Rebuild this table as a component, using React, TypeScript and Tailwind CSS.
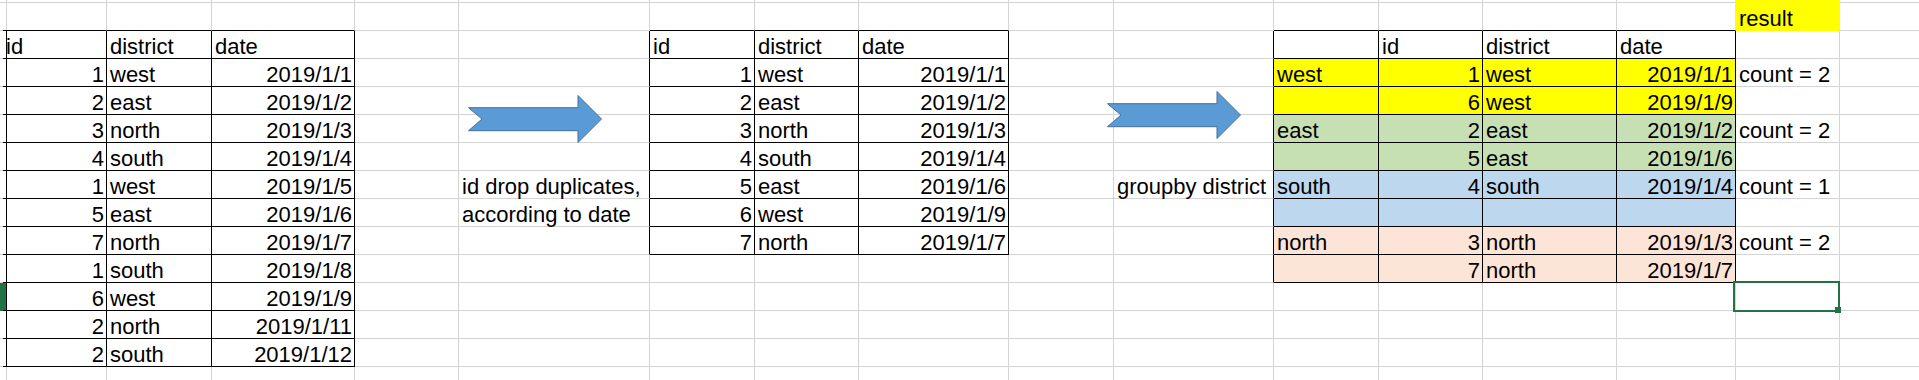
import React from "react";

type Fill = "y" | "g" | "b" | "p" | "s";
type Cell = { t?: string; r?: boolean; f?: Fill };

const BG: Record<Fill, string> = {
  y: "bg-[#ffff00]",
  g: "bg-[#c6e0b4]",
  b: "bg-[#bdd7ee]",
  p: "bg-[#fce4d6]",
  s: "bg-[#217346]",
};
const BR: Record<string, string> = {
  k: "border-r-black",
  x: "border-r-[#d4d4d4]",
  y: "border-r-[#ffff00]",
  g: "border-r-[#c6e0b4]",
  b: "border-r-[#bdd7ee]",
  p: "border-r-[#fce4d6]",
  s: "border-r-[#217346]",
};
const BB: Record<string, string> = {
  k: "border-b-black",
  x: "border-b-[#d4d4d4]",
  y: "border-b-[#ffff00]",
  g: "border-b-[#c6e0b4]",
  b: "border-b-[#bdd7ee]",
  p: "border-b-[#fce4d6]",
  s: "border-b-[#217346]",
};

const ROWS = 15;
const COLS = 17;

const cells: Record<string, Cell> = {};
const put = (R: number, C: number, c: Cell) => {
  cells[`${R},${C}`] = { ...cells[`${R},${C}`], ...c };
};

const tables = [
  { r0: 2, r1: 13, c0: 1, c1: 3 },
  { r0: 2, r1: 9, c0: 6, c1: 8 },
  { r0: 2, r1: 10, c0: 11, c1: 14 },
];
const inTable = (R: number, C: number) =>
  tables.some((t) => R >= t.r0 && R <= t.r1 && C >= t.c0 && C <= t.c1);

// first table
const raw = [
  ["1", "west", "2019/1/1"],
  ["2", "east", "2019/1/2"],
  ["3", "north", "2019/1/3"],
  ["4", "south", "2019/1/4"],
  ["1", "west", "2019/1/5"],
  ["5", "east", "2019/1/6"],
  ["7", "north", "2019/1/7"],
  ["1", "south", "2019/1/8"],
  ["6", "west", "2019/1/9"],
  ["2", "north", "2019/1/11"],
  ["2", "south", "2019/1/12"],
];
["id", "district", "date"].forEach((h, i) => put(2, 1 + i, { t: h }));
raw.forEach((row, i) => {
  put(3 + i, 1, { t: row[0], r: true });
  put(3 + i, 2, { t: row[1] });
  put(3 + i, 3, { t: row[2], r: true });
});

// deduped table
const dedup = [
  ["1", "west", "2019/1/1"],
  ["2", "east", "2019/1/2"],
  ["3", "north", "2019/1/3"],
  ["4", "south", "2019/1/4"],
  ["5", "east", "2019/1/6"],
  ["6", "west", "2019/1/9"],
  ["7", "north", "2019/1/7"],
];
["id", "district", "date"].forEach((h, i) => put(2, 6 + i, { t: h }));
dedup.forEach((row, i) => {
  put(3 + i, 6, { t: row[0], r: true });
  put(3 + i, 7, { t: row[1] });
  put(3 + i, 8, { t: row[2], r: true });
});

// grouped table
const grouped: [string, string, string, string, Fill][] = [
  ["west", "1", "west", "2019/1/1", "y"],
  ["", "6", "west", "2019/1/9", "y"],
  ["east", "2", "east", "2019/1/2", "g"],
  ["", "5", "east", "2019/1/6", "g"],
  ["south", "4", "south", "2019/1/4", "b"],
  ["", "", "", "", "b"],
  ["north", "3", "north", "2019/1/3", "p"],
  ["", "7", "north", "2019/1/7", "p"],
];
["id", "district", "date"].forEach((h, i) => put(2, 12 + i, { t: h }));
grouped.forEach((row, i) => {
  const f = row[4];
  put(3 + i, 11, { t: row[0], f });
  put(3 + i, 12, { t: row[1], r: true, f });
  put(3 + i, 13, { t: row[2], f });
  put(3 + i, 14, { t: row[3], r: true, f });
});

put(1, 15, { t: "result", f: "y" });
put(0, 15, { f: "y" });
put(3, 15, { t: "count = 2" });
put(5, 15, { t: "count = 2" });
put(7, 15, { t: "count = 1" });
put(9, 15, { t: "count = 2" });

put(7, 5, { t: "id drop duplicates," });
put(8, 5, { t: "according to date" });
put(7, 10, { t: "groupby district" });

put(11, 0, { f: "s" });

const get = (R: number, C: number): Cell => cells[`${R},${C}`] ?? {};

function rightColor(R: number, C: number) {
  if (inTable(R, C) || inTable(R, C + 1)) return "k";
  const a = get(R, C).f;
  if (a) return a;
  const b = get(R, C + 1).f;
  if (b && C + 1 !== 0) return b;
  return "x";
}
function bottomColor(R: number, C: number) {
  if (inTable(R, C) || inTable(R + 1, C)) return "k";
  const a = get(R, C).f;
  if (a) return a;
  const b = get(R + 1, C).f;
  if (b && C !== 0) return b;
  return "x";
}

function Arrow({ className }: { className: string }) {
  return (
    <svg className={className} viewBox="0 0 134 48" width="134" height="48">
      <polygon
        points="0.5,12.7 110,12.7 110,0.5 133.5,24 110,47.5 110,35.7 0.5,35.7 14,24"
        fill="#5b9bd5"
        stroke="#41719c"
        strokeWidth="1"
      />
    </svg>
  );
}

export default function App() {
  const out: React.ReactNode[] = [];
  for (let R = 0; R < ROWS; R++) {
    for (let C = 0; C < COLS; C++) {
      const c = get(R, C);
      out.push(
        <div
          key={`${R}-${C}`}
          className={`flex items-end whitespace-nowrap border-r border-b px-[3px] leading-[22px] ${
            c.r ? "justify-end pr-[2px]" : "justify-start"
          } ${c.f ? BG[c.f] : ""} ${BR[rightColor(R, C)]} ${BB[bottomColor(R, C)]}`}
        >
          {c.t ?? ""}
        </div>
      );
    }
  }

  return (
    <div className="relative h-[380px] w-full overflow-hidden bg-white font-['Liberation_Sans',Arial,sans-serif] text-[22px] text-black">
      <div className="grid w-[1920px] grid-cols-[3px_104px_105px_143px_104px_191px_105px_104px_150px_105px_160px_105px_104px_134px_119px_104px_80px] grid-rows-[3px_repeat(13,28px)_14px]">
        {out}
      </div>

      <Arrow className="absolute left-[468px] top-[95px]" />
      <Arrow className="absolute left-[1107px] top-[91px]" />

      <div className="absolute left-[1733px] top-[281px] h-[31px] w-[107px] border-2 border-[#217346]" />
      <div className="absolute left-[1835px] top-[307px] h-[6px] w-[6px] bg-[#217346]" />
    </div>
  );
}
